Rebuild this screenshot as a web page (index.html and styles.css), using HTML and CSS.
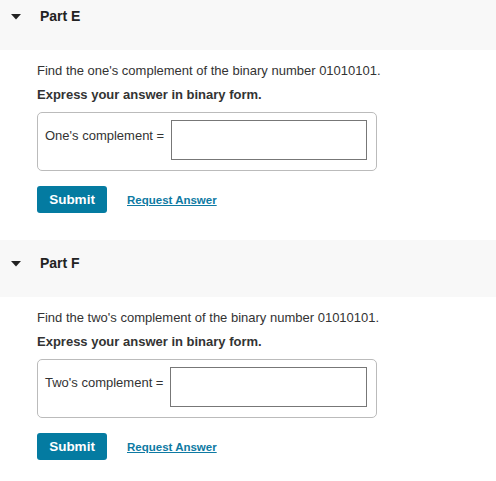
FILE: index.html
```html
<!DOCTYPE html>
<html>
  <head>
    <title>Parts E and F</title>
    <link rel="stylesheet" href="styles.css">
  </head>
  <body>
    <div class="parts">
      <div class="part">
        <div class="part-header">
          <svg class="caret" width="10" height="6" viewBox="0 0 10 6"><polygon points="0,0 10,0 5,5.5" fill="#222"/></svg>
          <span class="part-title">Part E</span>
        </div>
        <div class="part-body">
          <p class="question">Find the one's complement of the binary number 01010101.</p>
          <p class="instruction">Express your answer in binary form.</p>
          <div class="answer-box">
            <label class="answer-label" for="answerE">One's complement =</label>
            <input type="text" id="answerE" class="answer-input">
          </div>
          <div class="actions">
            <button class="submit">Submit</button>
            <a href="#" class="request">Request Answer</a>
          </div>
        </div>
      </div>

      <div class="part">
        <div class="part-header">
          <svg class="caret" width="10" height="6" viewBox="0 0 10 6"><polygon points="0,0 10,0 5,5.5" fill="#222"/></svg>
          <span class="part-title">Part F</span>
        </div>
        <div class="part-body">
          <p class="question">Find the two's complement of the binary number 01010101.</p>
          <p class="instruction">Express your answer in binary form.</p>
          <div class="answer-box">
            <label class="answer-label" for="answerF">Two's complement =</label>
            <input type="text" id="answerF" class="answer-input">
          </div>
          <div class="actions">
            <button class="submit">Submit</button>
            <a href="#" class="request">Request Answer</a>
          </div>
        </div>
      </div>
    </div>
  </body>
</html>
```
FILE: styles.css
```css
body {
  font-family: "Liberation Sans", Arial, sans-serif;
  font-size: 13px;
  color: #333;
  margin: 0;
  padding: 0;
  background-color: #fff;
}

.parts {
  margin-top: -7px;
}

.part {
  margin-bottom: 27px;
}

.part-header {
  display: flex;
  align-items: flex-start;
  height: 57px;
  box-sizing: border-box;
  padding: 16px 0 0 11px;
  background-color: #f8f8f8;
}

.caret {
  margin-top: 5px;
  margin-right: 19px;
}

.part-title {
  font-size: 14px;
  font-weight: bold;
  line-height: 15px;
  color: #222;
}

.part-body {
  padding: 12px 0 0 37px;
}

.question,
.instruction {
  margin: 0;
  line-height: 18px;
  white-space: nowrap;
}

.question {
  margin-bottom: 6px;
}

.instruction {
  font-weight: bold;
  color: #333;
  margin-bottom: 8px;
}

.answer-box {
  display: flex;
  align-items: flex-start;
  width: 340px;
  box-sizing: border-box;
  border: 1px solid #bbb;
  border-radius: 5px;
  padding: 7px 9px 10px 7px;
}

.answer-label {
  line-height: 18px;
  margin-top: 7px;
  margin-right: 7px;
  white-space: nowrap;
}

.answer-input {
  flex: 1;
  min-width: 0;
  height: 40px;
  box-sizing: border-box;
  border: 1px solid #777;
  border-radius: 0;
  padding: 0 6px;
  font-family: inherit;
  font-size: 13px;
}

.actions {
  display: flex;
  align-items: center;
  margin-top: 15px;
}

.submit {
  width: 70px;
  height: 27px;
  padding: 0;
  border: none;
  border-radius: 3px;
  background-color: #047ba1;
  color: #fff;
  font-family: inherit;
  font-size: 13.5px;
  font-weight: bold;
  cursor: pointer;
}

.request {
  margin-left: 20px;
  font-size: 11.5px;
  font-weight: bold;
  color: #0e7aa3;
  text-decoration: underline;
}
```
